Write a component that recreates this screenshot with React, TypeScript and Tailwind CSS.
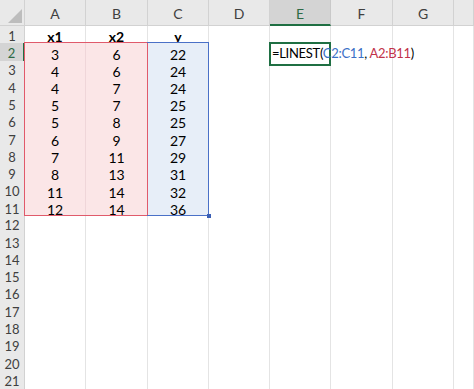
import React from "react";

const cols = ["A", "B", "C", "D", "E", "F", "G", ""];
const data: (string | number)[][] = [
  [3, 6, 22],
  [4, 6, 24],
  [4, 7, 24],
  [5, 7, 25],
  [5, 8, 25],
  [6, 9, 27],
  [7, 11, 29],
  [8, 13, 31],
  [11, 14, 32],
  [12, 14, 36],
];

const ROW_TPL =
  "grid grid-cols-[25px_61px_62px_61px_61px_61px_62px_61px_20px]";

function cellClass(r: number, c: number): string {
  const inData = r >= 2 && r <= 11;
  if (r === 1 && c < 3) return "bg-white border-r border-b border-[#e4e4e4] font-bold";
  if (inData) {
    if (c === 0) return "bg-[#fbe6e7] border-r border-b border-[#efd6d9]";
    if (c === 1) return "bg-[#fbe6e7] border-r border-b border-[#efd6d9]";
    if (c === 2) return "bg-[#e7eef8] border-r border-b border-[#d8e0ed]";
  }
  if (r === 2 && c === 4)
    return "relative z-10 -mt-px -ml-px border-2 border-[#1f6f43] bg-white justify-start! pl-[1px]";
  return "bg-white border-r border-b border-[#e4e4e4]";
}

export default function App() {
  const rows: React.ReactNode[] = [];
  for (let r = 1; r <= 21; r++) {
    const isSel = r === 2;
    const cells: React.ReactNode[] = [];
    for (let c = 0; c < 8; c++) {
      let text: React.ReactNode = "";
      if (r === 1 && c < 3) text = ["x1", "x2", "y"][c];
      if (r >= 2 && r <= 11 && c < 3) text = data[r - 2][c];
      if (r === 2 && c === 4)
        text = (
          <span className="whitespace-nowrap text-[13px] tracking-[-0.3px] text-black">
            =LINEST(<span className="text-[#3b6fc6]">C2:C11</span>,{" "}
            <span className="text-[#c2334a]">A2:B11</span>)
          </span>
        );
      cells.push(
        <div
          key={c}
          className={`${cellClass(r, c)} flex items-center justify-center text-[14px] text-black`}
        >
          {text}
        </div>
      );
    }
    rows.push(
      <div key={r} className={`${ROW_TPL} h-[17.3px]`}>
        <div
          className={
            isSel
              ? "flex items-center justify-center bg-[#d4d4d4] border-b border-[#cfcfcf] border-r-2 border-r-[#1f6f43] text-[#2d6a45] text-[13px]"
              : "flex items-center justify-center bg-[#e9e9e9] border-b border-r border-[#d2d2d2] text-[#404040] text-[13px]"
          }
        >
          {r}
        </div>
        {cells}
      </div>
    );
  }

  return (
    <div className="w-[474px] h-[389px] overflow-hidden bg-white font-['Lato','Open_Sans',sans-serif]">
      <div className="relative flex flex-col">
        <div className={`${ROW_TPL} h-[26px]`}>
          <div className="flex items-end justify-end p-[2px] bg-[#e9e9e9] border-r border-b border-[#d2d2d2]">
            <div className="w-0 h-0 border-l-[14px] border-l-transparent border-b-[14px] border-b-[#bdbdbd]" />
          </div>
          {cols.map((c, i) => (
            <div
              key={i}
              className={
                c === "E"
                  ? "flex items-center justify-center pt-[2px] bg-[#d4d4d4] border-r border-[#c9c9c9] border-b-2 border-b-[#1f6f43] text-[#2d6a45] text-[14px]"
                  : "flex items-center justify-center pt-[2px] bg-[#e9e9e9] border-r border-b border-[#d2d2d2] text-[#404040] text-[14px]"
              }
            >
              {c}
            </div>
          ))}
        </div>
        {rows}
        {/* range highlight A2:B11 (overlay) */}
        <div className="absolute left-[24px] top-[42.3px] w-[124px] h-[174px] border border-[#e05a6b] pointer-events-none" />
        {/* range highlight C2:C11 (overlay) */}
        <div className="absolute left-[147px] top-[42.3px] w-[62px] h-[174px] border border-[#4a70c7] border-l-0 pointer-events-none">
          <div className="absolute -right-[3px] -bottom-[3px] w-[4px] h-[4px] bg-[#3a5fb5]" />
        </div>
      </div>
    </div>
  );
}
